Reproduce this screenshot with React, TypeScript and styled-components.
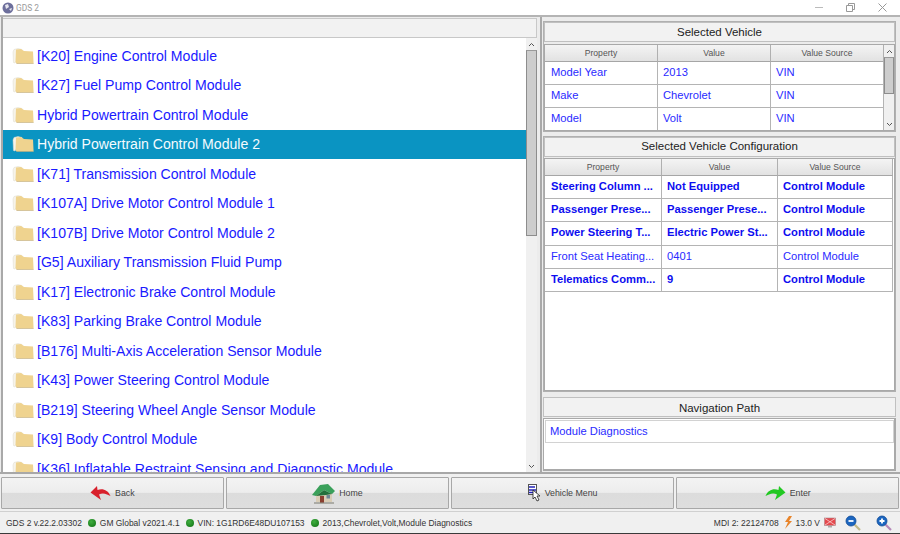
import React from "react";
import styled, { createGlobalStyle } from "styled-components";

const Global = createGlobalStyle`
  html, body { margin: 0; padding: 0; background: #f0f0f0; }
  body { font-family: "Liberation Sans", Arial, sans-serif; overflow: hidden; }
  * { box-sizing: border-box; }
`;

const Page = styled.div`
  width: 900px; height: 534px; display: flex; flex-direction: column; overflow: hidden; background: #f0f0f0;
`;
const TitleBar = styled.div`
  height: 15px; flex: none; background: #fff; display: flex; align-items: center; padding: 0 0 0 2px; color: #9a9a9a; font-family: Roboto, sans-serif; font-size: 8.4px; gap: 2px;
`;
const TitleText = styled.span`flex: 1; padding-top: 1px;`;
const WinButtons = styled.div`display: flex; align-items: center; gap: 23px; padding-right: 13px;`;
const Main = styled.div`
  height: 459px; flex: none; display: flex; background: #ececec; border-top: 2px solid #b4b4b4; border-bottom: 2px solid #a8a8a8; padding: 0 2px 0 1px;
`;
const LeftPane = styled.div`
  width: 536px; flex: none; display: flex; flex-direction: column; border-left: 2px solid #a9a9a9; padding-top: 1px;
`;
const LeftHeader = styled.div`
  height: 20px; flex: none; background: #f2f2f2; border: 1px solid #c8c8c8; border-left: 0;
`;
const ListWrap = styled.div`flex: 1; display: flex; min-height: 0; background: #fff;`;
const List = styled.div`width: 523px; flex: none; overflow: hidden; padding-top: 3px;`;
const Row = styled.div<{ $sel?: boolean }>`
  height: 29.5px; display: flex; align-items: center; padding-left: 9px; gap: 3px; font-size: 14.08px; white-space: nowrap;
  background: ${p => (p.$sel ? "#0a94c2" : "transparent")};
  color: ${p => (p.$sel ? "#f4fbfe" : "#1a1aff")};
`;
const ScrollTrack = styled.div<{ $w: number }>`
  width: ${p => p.$w}px; flex: none; background: #f0f0f0; display: flex; flex-direction: column; align-items: center;
`;
const ScrollBtn = styled.div`height: 7px; display: flex; align-items: center; justify-content: center; flex: none; margin: 3px 0 2px;`;
const Thumb = styled.div<{ $h: number }>`
  width: 100%; height: ${p => p.$h}px; flex: none; background: #cdcdcd; border: 1px solid #8d8d8d; border-top-color: #9a9a9a;
`;
const Spacer = styled.div`flex: 1;`;
const RightPane = styled.div`
  flex: 1; min-width: 0; margin-left: 3px; display: flex; flex-direction: column; border-left: 2px solid #a9a9a9; padding: 4px 2px 0 1px;
`;
const SectionTitle = styled.div<{ $mb: number; $shift?: number }>`
  height: 20px; flex: none; margin-bottom: ${p => p.$mb}px; padding: ${p => Math.max(p.$shift ?? 0, 0)}px 0 ${p => Math.max(-(p.$shift ?? 0), 0)}px; background: #f2f2f2; border: 1px solid #c0c0c0; display: flex; align-items: center; justify-content: center; font-size: 11.5px; color: #222;
`;
const Section = styled.div<{ $h: number; $mb: number }>`
  height: ${p => p.$h}px; margin-bottom: ${p => p.$mb}px; flex: none; display: flex; flex-direction: column; overflow: hidden; border: 1px solid #b0b0b0;
`;
const NavSection = styled.div`
  height: 74px; flex: none; display: flex; flex-direction: column;
`;
const TableBox = styled.div`
  flex: 1; display: flex; background: #fff; border: 1px solid #a9a9a9; min-height: 0;
`;
const TableCol = styled.div`flex: 1; min-width: 0; overflow: hidden; display: flex; flex-direction: column;`;
const Grid = styled.div<{ $cols: string }>`
  display: grid; grid-template-columns: ${p => p.$cols}; flex: none;
`;
const HeadCell = styled.div`
  height: 17px; background: linear-gradient(#f4f4f4, #e2e2e2); border-right: 1px solid #b0b0b0; border-bottom: 1px solid #a6a6a6; font-size: 8.6px; color: #555; display: flex; align-items: center; justify-content: center;
`;
const Cell = styled.div<{ $bold?: boolean; $h: number; $first: boolean }>`
  height: ${p => p.$h}px; border-right: 1px solid #b4b4b4; border-bottom: 1px solid #b4b4b4; padding: 0 0 2px ${p => (p.$first ? 6 : 5)}px; display: flex; align-items: center; font-size: 11.2px; font-weight: ${p => (p.$bold ? 700 : 400)}; color: ${p => (p.$bold ? "#0d0df0" : "#2a2aff")}; white-space: nowrap; overflow: hidden;
`;
const PathBox = styled.div`
  flex: 1; background: #fff; border: 1px solid #a9a9a9; border-bottom-width: 2px; border-right-width: 2px; padding: 1px 0 0 0;
`;
const PathItem = styled.div`
  height: 23px; border: 1px solid #d2d2d2; margin-left: 1px; padding: 0 0 1px 4px; display: flex; align-items: center; font-size: 11.2px; color: #2a2aff;
`;
const Buttons = styled.div`
  height: 37px; flex: none; display: flex; gap: 2.5px; padding: 3px 1px 2px; background: #f0f0f0;
`;
const NavButton = styled.div`
  flex: 1; height: 32px; border: 1px solid #a8a8a8; border-radius: 1px; background: linear-gradient(#f3f3f3 0%, #ededed 48%, #dcdcdc 50%, #dedede 100%); display: flex; align-items: center; justify-content: center; gap: 4px; font-size: 8.8px; color: #444;
`;
const Status = styled.div`
  height: 23px; flex: none; border-top: 1px solid #d0d0d0; border-bottom: 1px solid #3a3a3a; background: #f0f0f0; display: flex; align-items: center; padding: 0 8px 0 6px; font-size: 8.45px; color: #333; white-space: nowrap;
`;
const Dot = styled.span`
  width: 8px; height: 8px; border-radius: 50%; background: radial-gradient(circle at 40% 35%, #3fae3f, #0f6f12); margin: 0 4px 0 6px; flex: none;
`;
const Gap = styled.div`flex: 1;`;
const IconSlot = styled.div<{ $l?: number; $r?: number }>`
  display: flex; align-items: center; margin: 0 ${p => p.$r ?? 0}px 0 ${p => p.$l ?? 0}px;
`;
const FolderSvg = styled.svg`flex: none;`;

const Folder = () => (
  <FolderSvg width="22" height="16" viewBox="0 0 22 16">
    <path d="M1 4 L2 1.5 L6 0.5 L10 1.5 L9 6 L3 15 L1.5 14.5 Z" fill="#f6f3ea" stroke="#dedacb" strokeWidth="0.5" />
    <path d="M4 1.5 L9 1 L12 3 L21 3.5 L21.6 15.6 L4.5 15.6 L3.5 14 Z" fill="#efd38f" />
    <path d="M4.5 15.5 L21.6 15.6" stroke="#bca97c" strokeWidth="0.6" />
  </FolderSvg>
);
const Up = () => <svg width="7" height="5" viewBox="0 0 7 5"><path d="M1 4 L3.5 1.5 L6 4" fill="none" stroke="#555" strokeWidth="1" /></svg>;
const Down = () => <svg width="7" height="5" viewBox="0 0 7 5"><path d="M1 1 L3.5 3.5 L6 1" fill="none" stroke="#555" strokeWidth="1" /></svg>;

const Globe = () => (
  <svg width="12" height="12" viewBox="0 0 12 12">
    <circle cx="6" cy="6" r="5.5" fill="#6d6f9c" />
    <path d="M3 3 L6 2 L7 5 L4 7 Z M7 7 L10 6 L9 9 Z" fill="#e6e6ee" />
  </svg>
);
const BackIcon = () => (
  <svg width="21" height="16" viewBox="0 0 21 16">
    <path d="M0.5 7.5 L7 1 L7.5 5 C12 3 18 4.5 20.5 11 L17 9.5 C14 8 11.5 8 9 9.5 L11 15 Z" fill="#d8202c" />
  </svg>
);
const EnterIcon = () => (
  <svg width="21" height="16" viewBox="0 0 21 16">
    <path d="M20.5 7.5 L14 1 L13.5 5 C9 3 3 4.5 0.5 11 L4 9.5 C7 8 9.5 8 12 9.5 L10 15 Z" fill="#22c822" />
  </svg>
);
const HomeIcon = () => (
  <svg width="23" height="21" viewBox="0 0 23 21">
    <path d="M4 10 H20 V19 H4 Z" fill="#d9cdb6" />
    <path d="M8 13 H12 V20 H8 Z" fill="#8a3f30" />
    <path d="M14.5 12 H18 V15.5 H14.5 Z" fill="#6d8794" />
    <path d="M0 12 L8 2 L16 1 L23 8 L20 11 L12 7 L4 13 Z" fill="#3aa05a" />
    <path d="M12 7 L4 13 L14 12 L20 11 Z" fill="#23703c" />
    <path d="M2 20 H22" stroke="#8a8a80" strokeWidth="1.2" />
  </svg>
);
const MenuIcon = () => (
  <svg width="13" height="18" viewBox="0 0 13 18">
    <rect x="0.5" y="0.5" width="8" height="10" fill="#fff" stroke="#555" />
    <path d="M1 3 H7 M1 6 H8 M1 8.5 H8" stroke="#2323b8" strokeWidth="1.4" />
    <path d="M5 6 L5 15 L7 13 L9 17 L11 16 L9 12 L12 12 Z" fill="#fff" stroke="#222" strokeWidth="0.8" />
  </svg>
);
const Bolt = () => (
  <svg width="9" height="13" viewBox="0 0 9 13">
    <path d="M5 0 L1 6 L4 6 L1 13 L8 5 L5 5 L8 0 Z" fill="#e8842a" />
  </svg>
);
const Mail = () => (
  <svg width="12" height="12" viewBox="0 0 12 12">
    <rect x="0.5" y="1" width="11" height="7.5" fill="#e5484d" stroke="#a8888a" strokeWidth="0.6" />
    <path d="M1 1.5 L11 8 M11 1.5 L1 8" stroke="#f7d0d0" strokeWidth="0.8" />
    <rect x="4" y="9" width="4" height="1.5" fill="#aaa" />
  </svg>
);
const Zoom = ({ plus }: { plus?: boolean }) => (
  <svg width="16" height="16" viewBox="0 0 16 16">
    <path d="M9.5 9.5 L15 15" stroke={plus ? "#b788b8" : "#c2b98a"} strokeWidth="2.2" />
    <circle cx="6" cy="6" r="5" fill="#1c66c0" stroke="#0f4a96" strokeWidth="0.8" />
    <path d={plus ? "M3.5 6 H8.5 M6 3.5 V8.5" : "M3.5 6 H8.5"} stroke="#fff" strokeWidth="1.8" />
  </svg>
);

const modules = [
  "[K20] Engine Control Module",
  "[K27] Fuel Pump Control Module",
  "Hybrid Powertrain Control Module",
  "Hybrid Powertrain Control Module 2",
  "[K71] Transmission Control Module",
  "[K107A] Drive Motor Control Module 1",
  "[K107B] Drive Motor Control Module 2",
  "[G5] Auxiliary Transmission Fluid Pump",
  "[K17] Electronic Brake Control Module",
  "[K83] Parking Brake Control Module",
  "[B176] Multi-Axis Acceleration Sensor Module",
  "[K43] Power Steering Control Module",
  "[B219] Steering Wheel Angle Sensor Module",
  "[K9] Body Control Module",
  "[K36] Inflatable Restraint Sensing and Diagnostic Module",
];
const vehicle = [
  ["Model Year", "2013", "VIN"],
  ["Make", "Chevrolet", "VIN"],
  ["Model", "Volt", "VIN"],
];
const config: { cells: string[]; bold: boolean }[] = [
  { cells: ["Steering Column ...", "Not Equipped", "Control Module"], bold: true },
  { cells: ["Passenger Prese...", "Passenger Prese...", "Control Module"], bold: true },
  { cells: ["Power Steering T...", "Electric Power St...", "Control Module"], bold: true },
  { cells: ["Front Seat Heating...", "0401", "Control Module"], bold: false },
  { cells: ["Telematics Comm...", "9", "Control Module"], bold: true },
];
const heads = ["Property", "Value", "Value Source"];

export default function App() {
  return (
    <Page>
      <Global />
      <TitleBar>
        <Globe />
        <TitleText>GDS 2</TitleText>
        <WinButtons>
          <svg width="8" height="2"><rect width="8" height="1" fill="#bbb" /></svg>
          <svg width="9" height="9" viewBox="0 0 9 9"><path d="M0.5 2.5 H6.5 V8.5 H0.5 Z M2.5 2.5 V0.5 H8.5 V6.5 H6.5" fill="none" stroke="#999" /></svg>
          <svg width="9" height="9" viewBox="0 0 9 9"><path d="M0.5 0.5 L8.5 8.5 M8.5 0.5 L0.5 8.5" stroke="#999" /></svg>
        </WinButtons>
      </TitleBar>
      <Main>
        <LeftPane>
          <LeftHeader />
          <ListWrap>
            <List>
              {modules.map((m, i) => (
                <Row key={m} $sel={i === 3}><Folder />{m}</Row>
              ))}
            </List>
            <ScrollTrack $w={11}>
              <ScrollBtn><Up /></ScrollBtn>
              <Thumb $h={186} />
              <Spacer />
              <ScrollBtn><Down /></ScrollBtn>
            </ScrollTrack>
          </ListWrap>
        </LeftPane>
        <RightPane>
          <Section $h={111} $mb={4}>
            <SectionTitle $mb={2}>Selected Vehicle</SectionTitle>
            <TableBox>
              <TableCol>
                <Grid $cols="113px 113px 113px">
                  {heads.map(h => <HeadCell key={h}>{h}</HeadCell>)}
                  {vehicle.flat().map((c, i) => <Cell key={i} $h={23} $first={i % 3 === 0}>{c}</Cell>)}
                </Grid>
              </TableCol>
              <ScrollTrack $w={10}>
                <ScrollBtn><Up /></ScrollBtn>
                <Thumb $h={37} />
                <Spacer />
                <ScrollBtn><Down /></ScrollBtn>
              </ScrollTrack>
            </TableBox>
          </Section>
          <Section $h={256} $mb={5}>
            <SectionTitle $mb={1} $shift={-2}>Selected Vehicle Configuration</SectionTitle>
            <TableBox>
              <TableCol>
                <Grid $cols="117px 116px 115px">
                  {heads.map(h => <HeadCell key={h}>{h}</HeadCell>)}
                  {config.map(r => r.cells.map((c, i) => (
                    <Cell key={r.cells[0] + i} $h={23.2} $bold={r.bold} $first={i === 0}>{c}</Cell>
                  )))}
                </Grid>
              </TableCol>
            </TableBox>
          </Section>
          <NavSection>
            <SectionTitle $mb={1} $shift={2}>Navigation Path</SectionTitle>
            <PathBox><PathItem>Module Diagnostics</PathItem></PathBox>
          </NavSection>
        </RightPane>
      </Main>
      <Buttons>
        <NavButton><BackIcon />Back</NavButton>
        <NavButton><HomeIcon />Home</NavButton>
        <NavButton><MenuIcon />Vehicle Menu</NavButton>
        <NavButton><EnterIcon />Enter</NavButton>
      </Buttons>
      <Status>
        GDS 2 v.22.2.03302
        <Dot />GM Global v2021.4.1
        <Dot />VIN: 1G1RD6E48DU107153
        <Dot />2013,Chevrolet,Volt,Module Diagnostics
        <Gap />
        MDI 2: 22124708
        <IconSlot $l={5} $r={3}><Bolt /></IconSlot>
        13.0 V
        <IconSlot $l={4} $r={9}><Mail /></IconSlot>
        <IconSlot $r={15}><Zoom /></IconSlot>
        <IconSlot><Zoom plus /></IconSlot>
      </Status>
    </Page>
  );
}
